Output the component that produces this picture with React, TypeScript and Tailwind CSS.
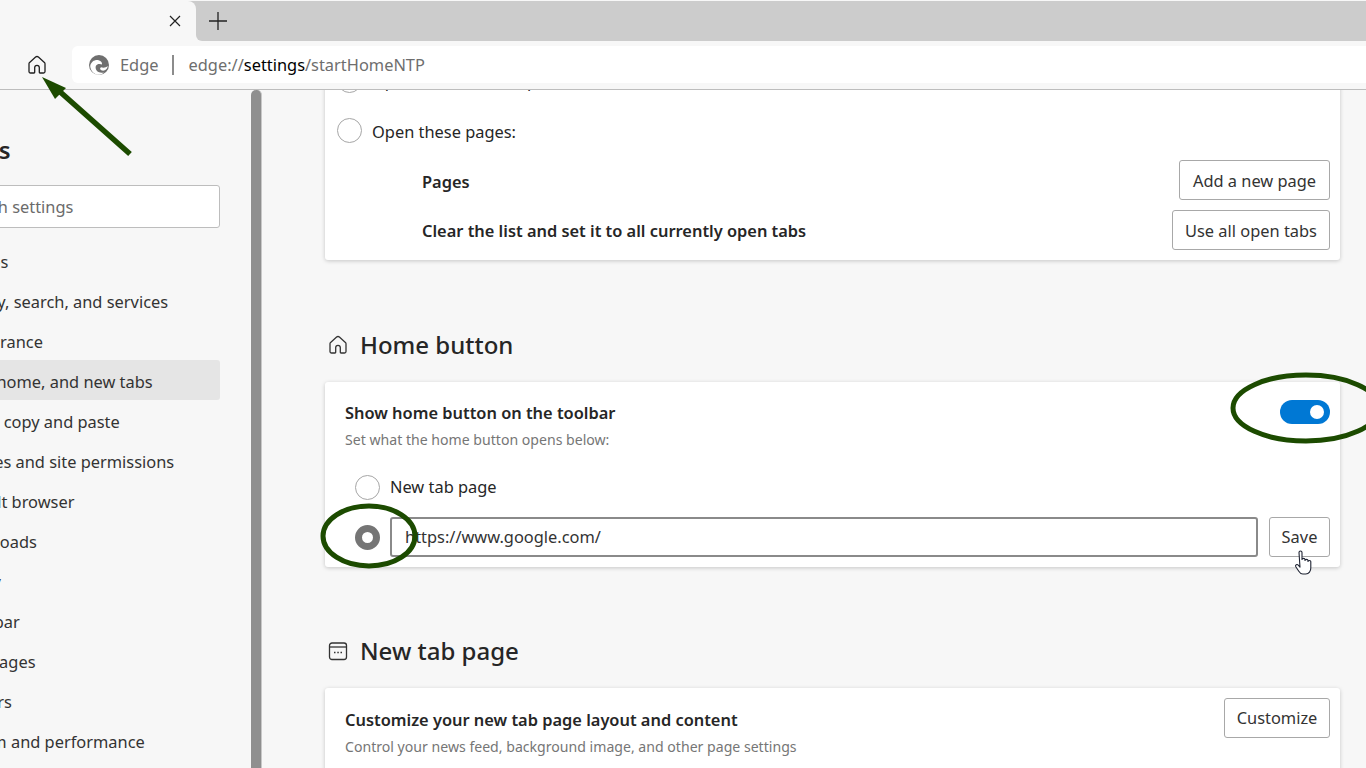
const navItems = [
  "Profiles",
  "Privacy, search, and services",
  "Appearance",
  "Start, home, and new tabs",
  "Share, copy and paste",
  "Cookies and site permissions",
  "Default browser",
  "Downloads",
  "Family",
  "Edge bar",
  "Languages",
  "Printers",
  "System and performance",
];

const HomeIcon = ({ className }: { className?: string }) => (
  <svg viewBox="0 0 20 20" fill="none" stroke="currentColor" strokeWidth="1.3" strokeLinejoin="round" className={className}>
    <path d="M8.6 2.100a2.100 2.100 0 0 1 2.800 0l6 5.300c.4.400.6.800.6 1.300v7.800c0 .9-.6 1.500-1.500 1.500H13c-.4 0-.7-.3-.7-.7v-4.700a2.300 2.300 0 0 0-4.600 0v4.700c0 .4-.3.7-.7.700H3.500c-.9 0-1.500-.6-1.500-1.500V8.700c0-.5.2-.9.6-1.300z" />
  </svg>
);

const Radio = ({ checked }: { checked?: boolean }) =>
  checked ? (
    <span className="size-[25px] shrink-0 rounded-full border-[7px] border-[#757575] bg-white" />
  ) : (
    <span className="size-[25px] shrink-0 rounded-full border border-[#a6a6a6] bg-white" />
  );

const OutlineButton = ({ label, className }: { label: string; className?: string }) => (
  <button className={`h-10 shrink-0 rounded-[3px] border border-[#a8a8a8] bg-white text-[#333] ${className}`}>{label}</button>
);

export default function App() {
  return (
    <div className="relative flex h-[768px] w-[1366px] flex-col overflow-hidden bg-[#f7f7f7] text-[16.4px] text-[#262626] [font-family:'Noto_Sans',sans-serif]">
      <div className="mt-px flex h-10 shrink-0 bg-[#cccccc]">
        <div className="relative flex w-[196px] items-center justify-end rounded-tr-lg bg-[#f7f7f7] pr-[15px]">
          <svg viewBox="0 0 12 12" className="size-3 text-[#222]" stroke="currentColor" strokeWidth="1.2">
            <path d="M1 1l10 10M11 1L1 11" />
          </svg>
          <div className="absolute -right-[6px] bottom-0 size-[6px] bg-[#f7f7f7]">
            <div className="size-[6px] rounded-bl-[6px] bg-[#cccccc]" />
          </div>
        </div>
        <div className="flex w-[44px] items-center justify-center">
          <svg viewBox="0 0 18 18" className="size-[18px] text-[#222]" stroke="currentColor" strokeWidth="1.3">
            <path d="M9 0v18M0 9h18" />
          </svg>
        </div>
      </div>

      <div className="flex h-[49px] shrink-0 items-start border-b border-[#bdbdbd] pt-[5px]">
        <div className="flex w-[72px] justify-end pr-[25px] pt-[9px]">
          <HomeIcon className="size-5 text-[#1f1f1f]" />
        </div>
        <div className="flex h-[37px] flex-1 items-center rounded-l-md bg-white pl-[17px] text-[#6e6e6e]">
          <svg viewBox="0 0 20 20" className="size-5">
            <circle cx="10" cy="10" r="10" fill="#6f6f6f" />
            <path d="M1.2 11C2 6.5 6 4.4 9.6 5.2c2.6.6 3.9 2.6 3.3 4.3-.9-.5-2.2-.8-3.6-.4C6.600 9.900 6 12.500 7.300 15c1.200 2.200 4.300 3.300 7.700 2.500-1.600 1.500-4 2.500-6.400 2.300C5 19.300 1.500 15.500 1.200 11z" fill="#fff" />
            <path d="M12 12.200c1.800.8 4.800.8 6.800-1.200-.2 1.500-1.200 3.500-3 4.300-1.900.8-4 .1-4.600-1.300-.2-.6.100-1.300.8-1.800z" fill="#fff" />
          </svg>
          <span className="ml-[11px] pt-[2px]">Edge</span>
          <span className="ml-[13px] h-[20px] w-[2px] bg-[#8c8c8c]" />
          <span className="ml-[15px] pt-[2px]">
            edge://<span className="text-black">settings</span>/startHomeNTP
          </span>
        </div>
      </div>

      <div className="flex min-h-0 flex-1">
        <aside className="w-[251px] shrink-0 overflow-hidden">
          <div className="-ml-[60px] w-[280px]">
            <h1 className="-ml-[25px] mt-[37px] flex h-[44px] items-center whitespace-nowrap pt-[1px] text-[24px] font-semibold">Settings</h1>
            <div className="mt-[14px] flex h-[43px] items-center rounded-[3px] border border-[#bdbdbd] bg-white pl-[15px] pt-[2px] text-[#6b6b6b]">
              Search settings
            </div>
            <nav className="mt-[12px] flex flex-col">
              {navItems.map((item) => (
                <div
                  key={item}
                  className={`flex h-10 items-center rounded-r-[3px] pl-[11px] pt-[4px] text-[#333] ${item.startsWith("Start") ? "bg-[#e5e5e5]" : ""}`}
                >
                  {item}
                </div>
              ))}
            </nav>
          </div>
        </aside>
        <div className="h-full w-[11px] shrink-0 rounded-t-[5px] border-r border-[#c8c8c8] bg-[#8f8f8f]" />

        <main className="min-w-0 flex-1 overflow-hidden pb-4 pl-[63px] pr-[26px] pt-[1px]">
          <section className="-mt-[35px] rounded-[3px] bg-white pb-[10px] pl-[12px] pr-[10px] shadow-[0_1px_4px_rgba(0,0,0,0.2)]">
            <div className="flex h-12 items-center gap-[10px]">
              <Radio />
              <span className="pt-[3px]">Open tabs from the previous session</span>
            </div>
            <div className="flex h-[53px] items-center gap-[10px]">
              <Radio />
              <span className="pt-[3px]">Open these pages:</span>
            </div>
            <div className="mt-[3px] flex items-center justify-between pl-[85px] font-semibold">
              <span className="pt-[4px]">Pages</span>
              <OutlineButton label="Add a new page" className="w-[151px] pt-[2px] font-normal" />
            </div>
            <div className="mt-[10px] flex items-center justify-between pl-[85px] font-semibold">
              <span className="pt-[2px]">Clear the list and set it to all currently open tabs</span>
              <OutlineButton label="Use all open tabs" className="w-[158px] pt-[2px] font-normal" />
            </div>
          </section>

          <h2 className="flex items-center gap-[12px] pb-[21px] pl-[3px] pt-[69px] text-[24px] font-medium leading-8">
            <HomeIcon className="size-5 text-[#333]" />
            Home button
          </h2>

          <section className="rounded-[3px] bg-white pb-[10px] pl-[20px] pr-[10px] shadow-[0_1px_4px_rgba(0,0,0,0.2)]">
            <div className="flex justify-between pt-[19px]">
              <div>
                <div className="font-semibold leading-6">Show home button on the toolbar</div>
                <div className="mt-[3px] text-[14.1px] leading-6 text-[#767676]">Set what the home button opens below:</div>
              </div>
              <div className="-mt-px flex h-6 w-[50px] items-center justify-end rounded-full bg-[#0078d4] pr-[6px]">
                <span className="size-[14px] rounded-full bg-white" />
              </div>
            </div>
            <div className="mt-[15px] flex h-10 items-center gap-[10px] pl-[10px]">
              <Radio />
              <span>New tab page</span>
            </div>
            <div className="mt-[10px] flex items-center pl-[10px]">
              <Radio checked />
              <div className="ml-[10px] flex h-10 min-w-0 flex-1 items-center rounded-[3px] border-2 border-[#8a8a8a] pl-[13px] text-[#333]">
                https://www.google.com/
              </div>
              <OutlineButton label="Save" className="ml-[11px] w-[61px]" />
            </div>
          </section>

          <h2 className="flex items-center gap-[12px] pb-[21px] pl-[3px] pt-[68px] text-[24px] font-medium leading-8">
            <svg viewBox="0 0 20 20" fill="none" stroke="currentColor" strokeWidth="1.3" className="size-5 text-[#333]">
              <rect x="1.500" y="2" width="17" height="16.500" rx="2.500" />
              <path d="M1.500 6h17" />
              <path d="M6 11.500h1.500M9.300 11.500h1.500M12.500 11.500h1.500" strokeWidth="1.600" />
            </svg>
            New tab page
          </h2>

          <section className="flex justify-between rounded-[3px] bg-white pb-[20px] pl-[20px] pr-[10px] pt-[10px] shadow-[0_1px_4px_rgba(0,0,0,0.2)]">
            <div className="pt-[10px]">
              <div className="font-semibold leading-6">Customize your new tab page layout and content</div>
              <div className="mt-[3px] text-[14.1px] leading-6 text-[#767676]">Control your news feed, background image, and other page settings</div>
            </div>
            <OutlineButton label="Customize" className="w-[106px]" />
          </section>
        </main>
      </div>

      <svg className="pointer-events-none absolute left-0 top-0" width="1366" height="768" viewBox="0 0 1366 768" fill="none">
        <path d="M130 154L58 90" stroke="#1c4b00" strokeWidth="5.500" />
        <path d="M42 77L66 88L55 99z" fill="#1c4b00" />
        <ellipse cx="1306" cy="408" rx="73" ry="33" stroke="#1c4b00" strokeWidth="5" />
        <ellipse cx="369" cy="536" rx="46" ry="30" stroke="#1c4b00" strokeWidth="5" />
        <path d="M1299 552.500c0-2 3-2 3 0v7c0-1.500 3-1.500 3 0v1c0-1.500 3-1.500 3 0v1c0-1.400 2.800-1.400 2.800 0v6.500c0 3-1.800 6-5 6h-3c-2 0-3-1.200-4-2.800l-3-4.500c-1-1.800 1.300-3 2.500-1.500l1.700 2z" fill="#fff" stroke="#1f2433" strokeWidth="1.100" strokeLinejoin="round" />
      </svg>
    </div>
  );
}
